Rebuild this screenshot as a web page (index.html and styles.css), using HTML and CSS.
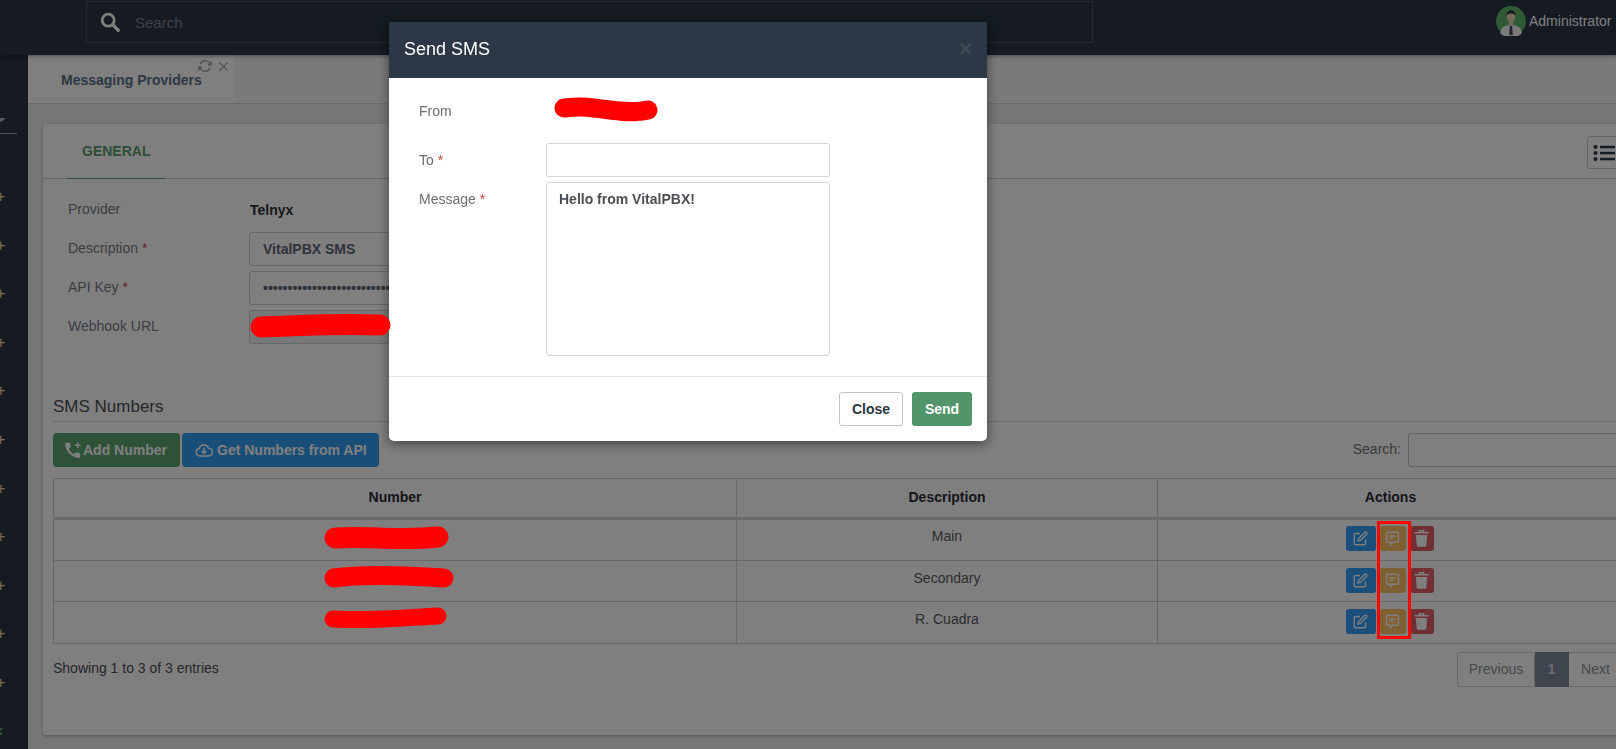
FILE: index.html
```html
<!DOCTYPE html>
<html lang="en">
<head>
<meta charset="utf-8">
<title>Messaging Providers</title>
<link rel="stylesheet" href="styles.css">
</head>
<body>
<div class="app">
  <header class="topbar">
    <div class="searchbox">
      <svg class="search-icon" viewBox="0 0 20 20"><circle cx="8.200" cy="8.200" r="6" fill="none" stroke="currentColor" stroke-width="2.800"/><path d="M12.800 12.800l5.400 5.400" stroke="currentColor" stroke-width="3.400" stroke-linecap="round"/></svg>
      <span class="search-text">Search</span>
    </div>
    <div class="user">
      <svg class="avatar" viewBox="0 0 30 30"><circle cx="15" cy="15" r="15" fill="#5fb56c"/><path d="M4 27c1-6 5-8 11-8s10 2 11 8a15 15 0 0 1-22 0z" fill="#f4f4f4"/><path d="M14 19h2l.8 10h-3.600z" fill="#3b4a5c"/><rect x="12.500" y="14" width="5" height="6" fill="#e6c8b0"/><ellipse cx="15" cy="11" rx="4.300" ry="5" fill="#f0d2ba"/><path d="M10.500 10c0-4 2-5.500 4.500-5.500s4.500 1.500 4.500 5.500c-1-2-2.500-2.500-4.500-2.500s-3.500.5-4.500 2.500z" fill="#2c2c34"/></svg>
      <span class="user-name">Administrator</span>
    </div>
  </header>
  <div class="workspace">
    <nav class="sidebar">
      <div class="side-head"><span class="side-caret"></span><span class="side-line"></span></div>
      <span class="side-item">+</span><span class="side-item">+</span><span class="side-item">+</span><span class="side-item">+</span><span class="side-item">+</span><span class="side-item">+</span><span class="side-item">+</span><span class="side-item">+</span><span class="side-item">+</span><span class="side-item">+</span><span class="side-item">+</span>
      <span class="side-item side-close">×</span>
    </nav>
    <main class="main">
      <div class="tabstrip">
        <div class="pagetab">
          <div class="pagetab-tools">
            <svg class="tool-refresh" viewBox="0 0 24 24" fill="none" stroke="currentColor" stroke-width="2.600"><path d="M23 4v6h-6M1 20v-6h6"/><path d="M3.500 9a9 9 0 0 1 14.900-3.400L23 10M1 14l4.600 4.400A9 9 0 0 0 20.500 15"/></svg>
            <svg class="tool-close" viewBox="0 0 12 12" stroke="currentColor" stroke-width="1.500"><path d="M1.500 1.500l9 9M10.500 1.500l-9 9"/></svg>
          </div>
          <span class="pagetab-title">Messaging Providers</span>
        </div>
      </div>
      <section class="card">
        <div class="card-tabs">
          <span class="card-tab">GENERAL</span>
          <button class="list-btn" type="button">
            <svg viewBox="0 0 22 18"><g fill="currentColor"><circle cx="2.500" cy="3" r="2"/><circle cx="2.500" cy="9" r="2"/><circle cx="2.500" cy="15" r="2"/><rect x="7" y="1.800" width="15" height="2.500"/><rect x="7" y="7.800" width="15" height="2.500"/><rect x="7" y="13.800" width="15" height="2.500"/></g></svg>
          </button>
        </div>
        <div class="form">
          <div class="form-row"><span class="form-label">Provider</span><strong class="form-static">Telnyx</strong></div>
          <div class="form-row"><span class="form-label">Description <i class="req">*</i></span><input class="form-input" type="text" value="VitalPBX SMS"></div>
          <div class="form-row"><span class="form-label">API Key <i class="req">*</i></span><input class="form-input" type="password" value="xxxxxxxxxxxxxxxxxxxxxxxxxxxxxxxxxxxxxxxxxx"></div>
          <div class="form-row"><span class="form-label">Webhook URL</span><input class="form-input form-disabled" type="text" disabled></div>
        </div>
        <div class="numbers">
          <h2 class="numbers-title">SMS Numbers</h2>
          <div class="toolbar">
            <div class="toolbar-actions">
              <button class="btn btn-add" type="button">
                <svg class="btn-phone" viewBox="2 1 20 20"><path fill="currentColor" d="M6.600 9.800c1.400 2.800 3.800 5.100 6.600 6.600l2.200-2.200c.3-.3.700-.4 1-.2 1.100.4 2.300.6 3.600.6.600 0 1 .4 1 1V20c0 .6-.4 1-1 1C10.600 21 2 12.400 2 3c0-.6.4-1 1-1h4.500c.6 0 1 .4 1 1 0 1.200.2 2.400.6 3.600.1.300 0 .7-.2 1z"/><path d="M18 1.500v7M14.500 5h7" stroke="currentColor" stroke-width="2"/></svg>
                Add Number
              </button>
              <button class="btn btn-api" type="button">
                <svg class="btn-cloud" viewBox="0 0 24 24" fill="none" stroke="currentColor" stroke-width="2"><path d="M6.500 20a5 5 0 0 1-.8-9.900A6.500 6.500 0 0 1 18 9.600 5.200 5.200 0 0 1 18 20z"/><path d="M12 9v7.500M8.800 13.500l3.200 3.200 3.200-3.200"/></svg>
                Get Numbers from API
              </button>
            </div>
            <label class="table-search"><span class="table-search-label">Search:</span> <input class="table-search-input" type="text"></label>
          </div>
          <table class="grid">
            <thead>
              <tr><th class="col-number">Number</th><th class="col-desc">Description</th><th class="col-actions">Actions</th></tr>
            </thead>
            <tbody>
              <tr>
                <td></td><td>Main</td>
                <td><div class="actions">
                  <span class="act act-edit"><svg viewBox="0 0 24 24" fill="none" stroke="currentColor" stroke-width="2.200"><path d="M11 4H4a2 2 0 0 0-2 2v14a2 2 0 0 0 2 2h14a2 2 0 0 0 2-2v-7"/><path d="M18.500 2.500a2.100 2.100 0 0 1 3 3L12 15l-4 1 1-4z"/></svg></span>
                  <span class="act act-sms"><svg viewBox="0 0 24 24" fill="none" stroke="currentColor" stroke-width="2.300"><path d="M4 2h16a1.500 1.500 0 0 1 1.500 1.500v13A1.500 1.500 0 0 1 20 18h-8l-3 4v-4H4a1.500 1.500 0 0 1-1.500-1.500v-13A1.500 1.500 0 0 1 4 2z"/><path d="M7 8h10M7 12h6"/></svg></span>
                  <span class="act act-del"><svg viewBox="0 0 24 24"><path fill="currentColor" d="M4 7h16l-1.200 15a1.500 1.500 0 0 1-1.500 1.500H6.700a1.500 1.500 0 0 1-1.500-1.500z"/><path d="M2 3.800h20M9 3.800V1h6v2.800" fill="none" stroke="currentColor" stroke-width="2"/></svg></span>
                </div></td>
              </tr>
              <tr>
                <td></td><td>Secondary</td>
                <td><div class="actions">
                  <span class="act act-edit"><svg viewBox="0 0 24 24" fill="none" stroke="currentColor" stroke-width="2.200"><path d="M11 4H4a2 2 0 0 0-2 2v14a2 2 0 0 0 2 2h14a2 2 0 0 0 2-2v-7"/><path d="M18.500 2.500a2.100 2.100 0 0 1 3 3L12 15l-4 1 1-4z"/></svg></span>
                  <span class="act act-sms"><svg viewBox="0 0 24 24" fill="none" stroke="currentColor" stroke-width="2.300"><path d="M4 2h16a1.500 1.500 0 0 1 1.500 1.500v13A1.500 1.500 0 0 1 20 18h-8l-3 4v-4H4a1.500 1.500 0 0 1-1.500-1.500v-13A1.500 1.500 0 0 1 4 2z"/><path d="M7 8h10M7 12h6"/></svg></span>
                  <span class="act act-del"><svg viewBox="0 0 24 24"><path fill="currentColor" d="M4 7h16l-1.200 15a1.500 1.500 0 0 1-1.500 1.500H6.700a1.500 1.500 0 0 1-1.500-1.500z"/><path d="M2 3.800h20M9 3.800V1h6v2.800" fill="none" stroke="currentColor" stroke-width="2"/></svg></span>
                </div></td>
              </tr>
              <tr>
                <td></td><td>R. Cuadra</td>
                <td><div class="actions">
                  <span class="act act-edit"><svg viewBox="0 0 24 24" fill="none" stroke="currentColor" stroke-width="2.200"><path d="M11 4H4a2 2 0 0 0-2 2v14a2 2 0 0 0 2 2h14a2 2 0 0 0 2-2v-7"/><path d="M18.500 2.500a2.100 2.100 0 0 1 3 3L12 15l-4 1 1-4z"/></svg></span>
                  <span class="act act-sms"><svg viewBox="0 0 24 24" fill="none" stroke="currentColor" stroke-width="2.300"><path d="M4 2h16a1.500 1.500 0 0 1 1.500 1.500v13A1.500 1.500 0 0 1 20 18h-8l-3 4v-4H4a1.500 1.500 0 0 1-1.500-1.500v-13A1.500 1.500 0 0 1 4 2z"/><path d="M7 8h10M7 12h6"/></svg></span>
                  <span class="act act-del"><svg viewBox="0 0 24 24"><path fill="currentColor" d="M4 7h16l-1.200 15a1.500 1.500 0 0 1-1.500 1.500H6.700a1.500 1.500 0 0 1-1.500-1.500z"/><path d="M2 3.800h20M9 3.800V1h6v2.800" fill="none" stroke="currentColor" stroke-width="2"/></svg></span>
                </div></td>
              </tr>
            </tbody>
          </table>
          <div class="table-foot">
            <span class="table-info">Showing 1 to 3 of 3 entries</span>
            <div class="pager"><span class="page page-prev">Previous</span><span class="page page-on">1</span><span class="page page-next">Next</span></div>
          </div>
        </div>
      </section>
    </main>
  </div>
</div>

<div class="backdrop"></div>

<div class="modal">
  <div class="modal-head"><span class="modal-title">Send SMS</span><span class="modal-x">×</span></div>
  <div class="modal-body">
    <div class="m-from"><span class="m-label">From</span></div>
    <div class="m-row m-row-center"><span class="m-label">To <i class="req">*</i></span><input class="m-input" type="text"></div>
    <div class="m-row"><span class="m-label m-label-top">Message <i class="req">*</i></span><textarea class="m-text">Hello from VitalPBX!</textarea></div>
  </div>
  <div class="modal-foot">
    <button class="m-btn m-close" type="button">Close</button>
    <button class="m-btn m-send" type="button">Send</button>
  </div>
</div>

<svg class="annotations" viewBox="0 0 1616 749">
  <g fill="none" stroke="#f00" stroke-linecap="round" stroke-linejoin="round">
    <path stroke-width="19" d="M564 108C574 107 580 106 594 108S632 114 648 110"/>
    <path stroke-width="21" d="M261 327C300 326 330 323 380 325"/>
    <path stroke-width="21" d="M335 538C370 536 400 541 438 537"/>
    <path stroke-width="19" d="M334 578C360 574 400 575 444 578"/>
    <path stroke-width="17" d="M333 619C370 621 400 618 438 616"/>
  </g>
  <rect x="1378.500" y="522.500" width="31" height="115" fill="none" stroke="#f00" stroke-width="3"/>
</svg>
</body>
</html>
```
FILE: styles.css
```css
* { box-sizing: border-box; }

html, body {
  margin: 0;
  height: 100%;
  overflow: hidden;
}

body {
  font-family: "Liberation Sans", Arial, sans-serif;
  font-size: 14px;
  color: #555;
  background: #e8ecf0;
}

.app {
  display: flex;
  flex-direction: column;
  height: 749px;
}

/* Top bar */
.topbar {
  flex: 0 0 55px;
  display: flex;
  align-items: flex-start;
  justify-content: space-between;
  background: #2a3546;
  padding: 1px 0 0 86px;
  box-shadow: 0 1px 4px rgba(0,0,0,.4);
  position: relative;
}

.searchbox {
  width: 1007px;
  height: 42px;
  display: flex;
  align-items: center;
  padding-left: 13px;
  border: 1px solid #46584f;
}

.search-icon { width: 20px; height: 20px; color: #fff; }

.search-text {
  margin-left: 15px;
  padding-top: 1px;
  font-size: 15px;
  color: #7c8592;
}

.user {
  display: flex;
  align-items: center;
  gap: 3px;
  width: 120px;
  flex: none;
  margin-top: 5px;
  color: #fff;
  white-space: nowrap;
}

.avatar { width: 30px; height: 30px; flex: none; }
.user-name { font-size: 14px; }

/* Workspace */
.workspace {
  flex: 1;
  display: flex;
  min-height: 0;
}

.sidebar {
  flex: 0 0 28px;
  display: flex;
  flex-direction: column;
  background: #2a3546;
  overflow: hidden;
}

.side-head {
  height: 118px;
  flex: none;
  display: flex;
  flex-direction: column;
  padding-top: 63px;
}

.side-caret {
  width: 0;
  height: 0;
  border-left: 5px solid transparent;
  border-right: 5px solid transparent;
  border-top: 4px solid #b8b8b8;
  margin-left: -4px;
}

.side-line {
  width: 17px;
  height: 1px;
  margin-top: 11px;
  background: #a6adb5;
}

.side-item {
  flex: 0 0 48.600px;
  line-height: 48.600px;
  margin-left: -4px;
  font-size: 16px;
  color: #f8d4a0;
}

.side-close { color: #7ed09a; margin-left: -6px; }

/* Main */
.main {
  flex: 1;
  min-width: 0;
  overflow: hidden;
  background: #e8ecf0;
}

.tabstrip {
  height: 49px;
  background: #f2f5f5;
  border-bottom: 1px solid #d2d5d6;
}

.pagetab {
  width: 207px;
  height: 48px;
  background: #fdfefd;
  padding: 4px 0 0 33px;
}

.pagetab-tools {
  height: 14px;
  display: flex;
  justify-content: flex-end;
  align-items: center;
  gap: 6px;
  padding-right: 6px;
  color: #a4a8a8;
}

.tool-refresh { width: 14px; height: 14px; }
.tool-close { width: 11px; height: 11px; }

.pagetab-title {
  display: block;
  margin-top: -1px;
  font-weight: 700;
  color: #5a7088;
  white-space: nowrap;
}

.card {
  width: 1600px;
  height: 611px;
  margin: 20px 0 0 15px;
  background: #fff;
  border-radius: 3px;
  box-shadow: 0 1px 3px rgba(0,0,0,.3);
}

.card-tabs {
  height: 55px;
  display: flex;
  justify-content: space-between;
  align-items: flex-start;
  padding: 12px 22px 0 24px;
  border-bottom: 1px solid #cfcfcf;
}

.card-tab {
  display: block;
  height: 43px;
  padding: 7px 15px 0;
  font-weight: 700;
  color: #5a9e6c;
  border-bottom: 1px solid #5a9e6c;
  width: 98px;
  text-align: center;
}

.list-btn {
  width: 34px;
  height: 33px;
  padding: 0 0 0 5px;
  display: flex;
  align-items: center;
  background: #fff;
  border: 1px solid #c8c8c8;
  border-radius: 3px;
  color: #2a3646;
}

.list-btn svg { width: 22px; height: 18px; flex: none; }

/* Form */
.form {
  display: flex;
  flex-direction: column;
  gap: 5px;
  padding: 14px 0 0 25px;
}

.form-row {
  display: flex;
  align-items: center;
  height: 34px;
}

.form-label { width: 181px; padding-bottom: 2px; color: #747c88; }
.req { font-style: normal; color: #c8433c; }

.form-static {
  padding-left: 1px;
  font-weight: 700;
  color: #2c3038;
}

.form-input {
  width: 420px;
  height: 34px;
  padding: 0 13px;
  font: 700 14px "Liberation Sans", Arial, sans-serif;
  color: #5c6678;
  background: #fff;
  border: 1px solid #cfcfcf;
  border-radius: 3px;
}

.form-disabled { background: #eef0f2; }

/* Numbers */
.numbers {
  width: 1570px;
  margin: 53px 0 0 10px;
}

.numbers-title {
  margin: 0;
  height: 22px;
  padding-bottom: 2px;
  font-size: 17px;
  line-height: 20px;
  font-weight: 400;
  color: #4a4e58;
  border-bottom: 1px solid #d8d8d8;
  box-sizing: content-box;
}

.toolbar {
  display: flex;
  justify-content: space-between;
  align-items: center;
  margin-top: 11px;
}

.toolbar-actions { display: flex; gap: 2px; }

.btn {
  height: 34px;
  display: flex;
  align-items: center;
  font: 700 14px "Liberation Sans", Arial, sans-serif;
  color: #fff;
  border: 0;
  border-radius: 4px;
  white-space: nowrap;
}

.btn-add { width: 127px; padding: 0 0 0 12px; gap: 2px; background: #5ca470; }
.btn-api { width: 197px; padding: 0 0 0 13px; gap: 4px; background: #309cf0; }
.btn-phone { width: 16px; height: 16px; flex: none; }
.btn-cloud { width: 18px; height: 18px; flex: none; }

.table-search {
  display: flex;
  align-items: center;
  gap: 7px;
  color: #767676;
}

.table-search-label { padding-bottom: 2px; }

.table-search-input {
  width: 215px;
  height: 34px;
  border: 1px solid #c8c8c8;
  border-radius: 3px;
  background: #fff;
}

.grid {
  width: 1570px;
  margin-top: 11px;
  border-collapse: collapse;
  table-layout: fixed;
  border: 1px solid #d0d0d0;
}

.col-number { width: 683px; }
.col-desc { width: 421px; }
.col-actions { width: 466px; }

.grid th {
  height: 40px;
  padding: 0 0 3px;
  border: 1px solid #d0d0d0;
  border-bottom: 3px solid #d4d4d4;
  font-size: 14px;
  color: #2a2a3a;
}

.grid td {
  height: 41.700px;
  padding: 0 0 7px;
  border: 1px solid #d0d0d0;
  text-align: center;
  color: #5a5a5a;
}

.actions {
  display: flex;
  justify-content: center;
  align-items: flex-start;
  gap: 4px;
  margin-bottom: -5px;
  padding-right: 2px;
}

.act {
  height: 25px;
  display: flex;
  align-items: center;
  justify-content: center;
  border-radius: 3px;
  color: #fff;
}

.act svg { width: 15px; height: 15px; }
.act-edit { width: 30px; background: #349ef8; }
.act-sms { width: 26px; background: #ffc064; }
.act-del { width: 24px; background: #e06068; }
.act-del svg { width: 17px; height: 17px; }

.table-foot {
  display: flex;
  justify-content: space-between;
  align-items: center;
  margin-top: 8px;
}

.table-info { padding-bottom: 4px; color: #4a4e58; }
.pager { display: flex; height: 35px; }

.page {
  display: flex;
  align-items: center;
  justify-content: center;
  padding-bottom: 2px;
  color: #8a929c;
  border: 1px solid #d4d4d4;
  border-left: 0;
}

.page-prev { width: 78px; border-left: 1px solid #d4d4d4; border-radius: 3px 0 0 3px; }
.page-on { width: 34px; background: #7c8a9e; border-color: #7c8a9e; color: #d8dde4; font-weight: 700; }
.page-next { width: 54px; border-radius: 0 3px 3px 0; }

/* Modal */
.backdrop {
  position: fixed;
  inset: 0;
  z-index: 10;
  background: rgba(0,0,0,.5);
}

.modal {
  position: fixed;
  z-index: 20;
  left: 389px;
  top: 22px;
  width: 598px;
  height: 419px;
  background: #fff;
  border-radius: 0 0 5px 5px;
  box-shadow: 0 3px 12px rgba(0,0,0,.5);
  display: flex;
  flex-direction: column;
}

.modal-head {
  flex: 0 0 56px;
  display: flex;
  align-items: center;
  justify-content: space-between;
  padding: 0 15px 2px;
  background: #2c3846;
}

.modal-title { font-size: 18px; color: #fff; }

.modal-x {
  font-size: 22px;
  font-weight: 700;
  line-height: 1;
  color: #3e4a54;
}

.modal-body {
  flex: 1;
  padding: 0 0 0 30px;
  color: #6c6c6c;
}

.m-from { height: 65px; padding-top: 25px; }

.m-row { display: flex; margin-bottom: 5px; }
.m-row-center { align-items: center; }
.m-label { display: block; width: 127px; flex: none; }
.m-label-top { padding-top: 9px; }

.m-input, .m-text {
  width: 284px;
  background: #fff;
  border: 1px solid #d6d6d6;
  border-radius: 3px;
}

.m-input { height: 34px; }

.m-text {
  height: 174px;
  padding: 8px 12px;
  resize: none;
  font: 700 14px "Liberation Sans", Arial, sans-serif;
  color: #4a4f55;
}

.modal-foot {
  flex: 0 0 65px;
  display: flex;
  justify-content: flex-end;
  gap: 9px;
  padding: 15px 15px 0;
  border-top: 1px solid #e4e4e4;
}

.m-btn {
  height: 34px;
  font: 700 14px "Liberation Sans", Arial, sans-serif;
  border-radius: 3px;
}

.m-close { width: 64px; color: #2a3540; background: #fff; border: 1px solid #c4c4c4; }
.m-send { width: 60px; color: #fff; background: #52956a; border: 0; }

/* Red markings on top of the capture */
.annotations {
  position: fixed;
  left: 0;
  top: 0;
  z-index: 30;
  width: 1616px;
  height: 749px;
  pointer-events: none;
}
```
